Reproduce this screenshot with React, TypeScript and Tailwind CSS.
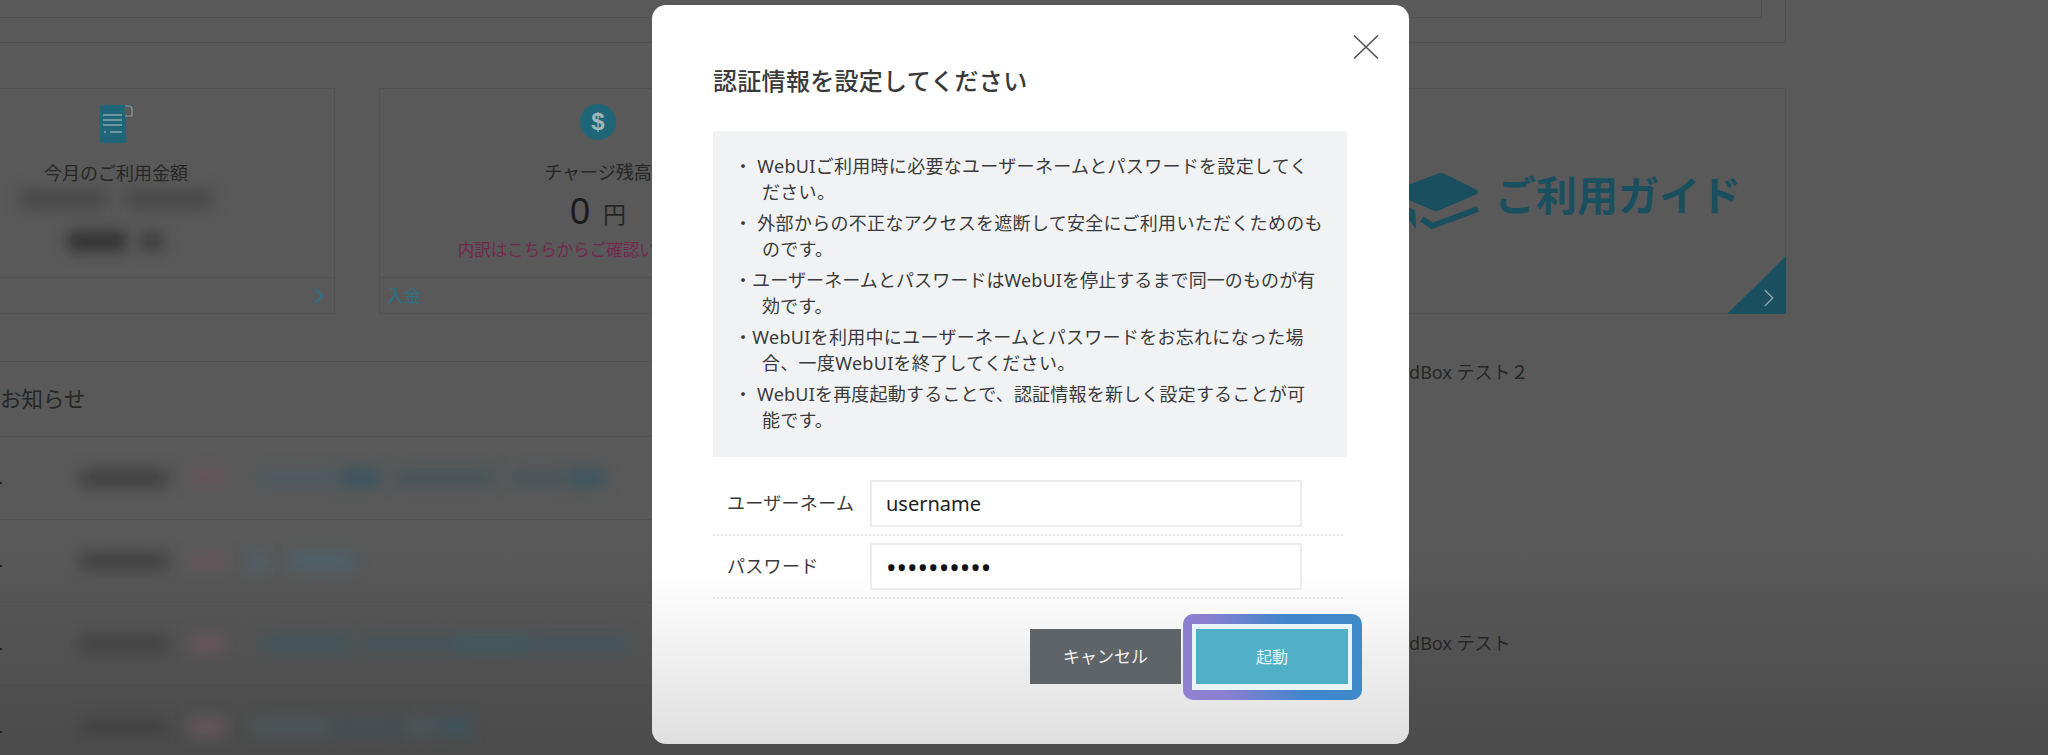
import { ChevronRight } from 'lucide-react';

const notices = [
  [
    { w: 84, ml: 0, c: 'bg-[#4f5a5e]' },
    { w: 40, ml: 0, c: 'bg-[#3e5560]' },
    { w: 100, ml: 14, c: 'bg-[#4a5659]' },
    { w: 60, ml: 14, c: 'bg-[#4d575a]' },
    { w: 36, ml: 0, c: 'bg-[#3f5760]' },
  ],
  [
    { w: 20, ml: -10, c: 'bg-[#50606a]' },
    { w: 66, ml: 22, c: 'bg-[#4f6068]' },
  ],
  [
    { w: 90, ml: 4, c: 'bg-[#43555a]' },
    { w: 90, ml: 12, c: 'bg-[#455358]' },
    { w: 80, ml: 0, c: 'bg-[#3f585e]' },
    { w: 94, ml: 0, c: 'bg-[#45545a]' },
  ],
  [
    { w: 84, ml: -6, c: 'bg-[#4c5457]' },
    { w: 66, ml: 0, c: 'bg-[#464f53]' },
    { w: 36, ml: 4, c: 'bg-[#4b5457]' },
    { w: 30, ml: 0, c: 'bg-[#3f545d]' },
  ],
];

const DocIcon = () => (
  <svg width="36" height="38" viewBox="0 0 36 38">
    <path d="M4 0h30v10h-6v26a2 2 0 0 1-2 2H4a2 2 0 0 1-2-2V2a2 2 0 0 1 2-2z" fill="#1f6678" />
    <path d="M27 1h4a3 3 0 0 1 3 3v7h-7" fill="#595959" stroke="#8a9a9e" strokeWidth="1.2" />
    <path d="M5 10h19M5 15h19M5 20h19" stroke="#8fa7ad" strokeWidth="1.6" />
    <path d="M6 27h2M12 27h12" stroke="#8fa7ad" strokeWidth="1.6" />
  </svg>
);

const DollarIcon = () => (
  <div className="w-[36px] h-[36px] rounded-full bg-[#1f6678] flex items-center justify-center text-[#9fb8be] text-[24px] leading-none font-bold font-['Liberation_Sans',sans-serif]">
    $
  </div>
);

const CapIcon = () => (
  <svg width="102" height="60" viewBox="0 0 102 60" className="shrink-0">
    <path d="M59 3q4-2 8 0l32 16q2 2 0 4L62 39q-4 2-8 0L17 23q-2-2 0-4z" fill="#1a4f60" />
    <path d="M44 48l10 7 46-17" fill="none" stroke="#1a4f60" strokeWidth="6" />
    <path d="M28 36l9 3 1 19-6-8-4 2z" fill="#1a4f60" />
  </svg>
);

const Blob = ({ className, w, ml = 0 }: { className: string; w: number; ml?: number }) => (
  <div className={`h-[20px] rounded-sm blur-[7px] shrink-0 ${className}`} style={{ width: w, marginLeft: ml }} />
);

export default function App() {
  return (
    <div className="relative w-[2048px] h-[755px] overflow-hidden bg-[linear-gradient(180deg,#595959_0%,#595959_72%,#4b4b4b_100%)] font-['Noto_Sans','Noto_Sans_CJK_JP',sans-serif] text-[#262626]">
      <div className="ml-[-103px] w-[1889px]">
        {/* top panels */}
        <div className="h-[43px] border-b border-r border-[#505050]">
          <div className="h-[18px] mr-[23px] border-b border-r border-[#505050]" />
        </div>

        {/* summary cards */}
        <div className="flex gap-[44px] mt-[45px] h-[226px]">
          <div className="w-[438px] border border-[#525252] flex flex-col">
            <div className="h-[189px] flex flex-col items-center pt-[16px] border-b border-[#525252]">
              <DocIcon />
              <div className="mt-[17px] text-[18px] leading-[26px]">今月のご利用金額</div>
              <div className="mt-[3px] flex gap-[18px]">
                <Blob className="bg-[#4a4a4a]" w={88} />
                <Blob className="bg-[#4a4a4a]" w={88} />
              </div>
              <div className="mt-[22px] flex gap-[14px] items-center">
                <Blob className="bg-[#333333]" w={58} />
                <Blob className="bg-[#404040]" w={24} />
              </div>
            </div>
            <div className="flex-1 flex items-center justify-end pr-[2px] text-[#2a7186]">
              <ChevronRight size={26} strokeWidth={2} />
            </div>
          </div>

          <div className="w-[438px] border border-[#525252] flex flex-col">
            <div className="h-[189px] flex flex-col items-center pt-[15px] border-b border-[#525252]">
              <DollarIcon />
              <div className="mt-[19px] text-[18px] leading-[26px]">チャージ残高</div>
              <div className="mt-[7px] h-[40px] flex items-end leading-none">
                <span className="text-[36px] font-['Liberation_Sans',sans-serif] leading-[40px] text-[#1c1c1c]">0</span>
                <span className="ml-[13px] mb-[3px] text-[23px] leading-[30px]">円</span>
              </div>
              <div className="mt-[5px] text-[16.5px] leading-[26px] text-[#74284f] whitespace-nowrap">内訳はこちらからご確認いただけます</div>
            </div>
            <div className="flex-1 flex items-center pl-[7px] text-[17px] text-[#2a7186]">入金</div>
          </div>

          <div className="relative flex-1 border border-[#525252] flex items-center justify-end gap-[15px] pr-[44px]">
            <CapIcon />
            <div className="mb-[12px] text-[41px] leading-[50px] font-bold text-[#1a4f60] whitespace-nowrap">ご利用ガイド</div>
            <div className="absolute -right-px -bottom-px w-[59px] h-[58px] bg-[#1a4f60] [clip-path:polygon(100%_0,100%_100%,0_100%)]">
              <ChevronRight size={30} strokeWidth={1.1} className="absolute right-[2px] bottom-[1px] text-[#8fa8b0]" />
            </div>
          </div>
        </div>

        {/* notices + side text */}
        <div className="flex">
          <div className="w-[1300px] mt-[47px] border-t border-[#505050]">
            <div className="h-[75px] flex items-center pl-[103px] text-[21.5px] border-b border-[#505050]">お知らせ</div>
            {notices.map((segments, i) => (
              <div key={i} className="h-[83px] flex items-center border-b border-dotted border-[#4a4a4a]">
                <span className="ml-[103px] mt-[10px] w-[2px] h-[2px] bg-[#222222] shrink-0" />
                <Blob className="bg-[#444444]" w={88} ml={78} />
                <Blob className="bg-[#64555a]" w={36} ml={21} />
                <div className="flex ml-[32px]">
                  {segments.map((s, j) => (
                    <Blob key={j} className={s.c} w={s.w} ml={s.ml} />
                  ))}
                </div>
              </div>
            ))}
          </div>
          <div className="ml-[181px] pt-[45px] text-[18px] leading-[26px] whitespace-nowrap">
            <div>SandBox テスト２</div>
            <div className="mt-[245px]">SandBox テスト</div>
          </div>
        </div>
      </div>

      {/* modal */}
      <div className="absolute left-[652px] top-[5px] w-[757px] h-[739px] rounded-[14px] pl-[61px] bg-[linear-gradient(180deg,#ffffff_0%,#ffffff_77%,#dfdfdf_100%)] text-[#3a3a3a]">
        <button type="button" className="absolute left-[701px] top-[30px] text-[#555555]">
          <svg width="26" height="24" viewBox="0 0 26 24" fill="none" stroke="currentColor" strokeWidth="1.6">
            <path d="M1 0.5L25 23.5M25 0.5L1 23.5" />
          </svg>
        </button>

        <h2 className="pt-[60px] text-[24px] leading-[32px] tracking-[0.3px] font-medium">認証情報を設定してください</h2>

        <ul className="mt-[34px] w-[634px] h-[326px] bg-[#f1f2f4] pt-[22px] pl-[21px] flex flex-col gap-[5px] text-[18px] leading-[26px] tracking-[0.3px] whitespace-nowrap">
          <li className="pl-[28px] -indent-[28px]">・ WebUIご利用時に必要なユーザーネームとパスワードを設定してく<br />ださい。</li>
          <li className="pl-[28px] -indent-[28px]">・ 外部からの不正なアクセスを遮断して安全にご利用いただくためのも<br />のです。</li>
          <li className="pl-[28px] -indent-[28px] tracking-[0.1px]">・ユーザーネームとパスワードはWebUIを停止するまで同一のものが有<br />効です。</li>
          <li className="pl-[28px] -indent-[28px]">・WebUIを利用中にユーザーネームとパスワードをお忘れになった場<br />合、一度WebUIを終了してください。</li>
          <li className="pl-[28px] -indent-[28px] tracking-[0.2px]">・ WebUIを再度起動することで、認証情報を新しく設定することが可<br />能です。</li>
        </ul>

        <div className="mt-[16px] w-[630px]">
          <div className="flex items-center pt-[7px] pb-[7px] pl-[14px] border-b-2 border-dotted border-[#e6e6e6]">
            <label className="w-[143px] text-[18px] tracking-[0.3px]">ユーザーネーム</label>
            <input
              readOnly
              value="username"
              className="w-[432px] h-[47px] border-2 border-[#ececec] bg-white px-[14px] text-[20px] text-[#222222] outline-none"
            />
          </div>
          <div className="flex items-center pt-[7px] pb-[7px] pl-[14px] border-b-2 border-dotted border-[#e6e6e6]">
            <label className="w-[143px] text-[18px] tracking-[0.3px]">パスワード</label>
            <input
              readOnly
              type="password"
              value="password12"
              className="w-[432px] h-[47px] border-2 border-[#ececec] bg-white px-[14px] text-[28px] text-[#111111] outline-none"
            />
          </div>
        </div>

        <div className="mt-[30px] w-[635px] flex justify-end gap-[15px]">
          <button type="button" className="w-[151px] h-[55px] bg-[#5f6468] text-[#f2f2f2] text-[17px]">キャンセル</button>
          <button type="button" className="relative w-[152px] h-[55px] text-[16px] text-[#e6f4f8]">
            <span className="absolute -left-[13px] -right-[14px] -top-[15px] -bottom-[16px] rounded-[10px] bg-[linear-gradient(75deg,#9080d0_0%,#8a7fd0_22%,#3f86cc_62%,#3f8ac8_100%)]" />
            <span className="absolute -left-[4px] -right-[4px] -top-[5px] -bottom-[6px] bg-[#e8f4f8]" />
            <span className="absolute inset-0 bg-[#4fb0c8] flex items-center justify-center">起動</span>
          </button>
        </div>
      </div>
    </div>
  );
}
